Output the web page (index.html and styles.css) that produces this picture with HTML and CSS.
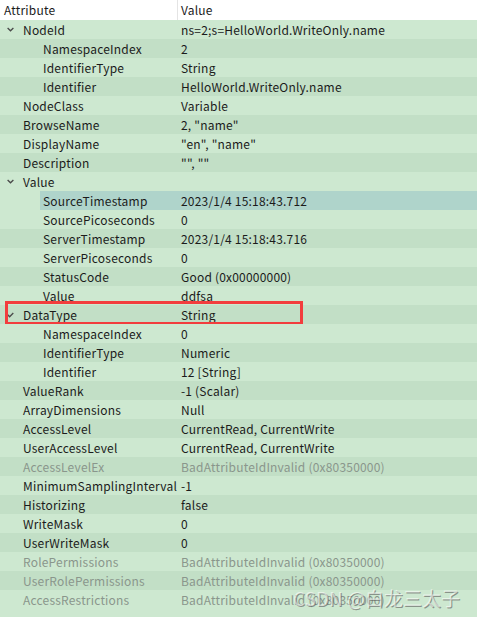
FILE: index.html
```html
<!DOCTYPE html>
<html>
<head>
<meta charset="utf-8">
<link rel="stylesheet" href="styles.css">
</head>
<body>
<div class="grid">
  <div class="header">
    <div class="h-attr">Attribute</div>
    <div class="h-val">Value</div>
  </div>
  <div class="row l0 odd"><div class="indent"><svg class="chev" viewBox="0 0 8 5"><path d="M0.7 0.7 L4 4 L7.3 0.7" /></svg></div><div class="name">NodeId</div><div class="val">ns=2;s=HelloWorld.WriteOnly.name</div></div>
  <div class="row l1 even"><div class="indent"></div><div class="name">NamespaceIndex</div><div class="val">2</div></div>
  <div class="row l1 odd"><div class="indent"></div><div class="name">IdentifierType</div><div class="val">String</div></div>
  <div class="row l1 even"><div class="indent"></div><div class="name">Identifier</div><div class="val">HelloWorld.WriteOnly.name</div></div>
  <div class="row l0 odd"><div class="indent"></div><div class="name">NodeClass</div><div class="val">Variable</div></div>
  <div class="row l0 even"><div class="indent"></div><div class="name">BrowseName</div><div class="val">2, "name"</div></div>
  <div class="row l0 odd"><div class="indent"></div><div class="name">DisplayName</div><div class="val">"en", "name"</div></div>
  <div class="row l0 even"><div class="indent"></div><div class="name">Description</div><div class="val">"", ""</div></div>
  <div class="row l0 odd"><div class="indent"><svg class="chev" viewBox="0 0 8 5"><path d="M0.7 0.7 L4 4 L7.3 0.7" /></svg></div><div class="name">Value</div><div class="val"></div></div>
  <div class="row l1 sel"><div class="indent"></div><div class="name">SourceTimestamp</div><div class="val">2023/1/4 15:18:43.712</div></div>
  <div class="row l1 odd"><div class="indent"></div><div class="name">SourcePicoseconds</div><div class="val">0</div></div>
  <div class="row l1 even"><div class="indent"></div><div class="name">ServerTimestamp</div><div class="val">2023/1/4 15:18:43.716</div></div>
  <div class="row l1 odd"><div class="indent"></div><div class="name">ServerPicoseconds</div><div class="val">0</div></div>
  <div class="row l1 even"><div class="indent"></div><div class="name">StatusCode</div><div class="val">Good (0x00000000)</div></div>
  <div class="row l1 odd"><div class="indent"></div><div class="name">Value</div><div class="val">ddfsa</div></div>
  <div class="row l0 even marked"><div class="indent"><svg class="chev tick" viewBox="0 0 8 6"><path d="M0.8 2.8 L3 5 L7.2 0.8" /></svg></div><div class="name">DataType</div><div class="val">String</div><div class="redbox"></div></div>
  <div class="row l1 odd"><div class="indent"></div><div class="name">NamespaceIndex</div><div class="val">0</div></div>
  <div class="row l1 even"><div class="indent"></div><div class="name">IdentifierType</div><div class="val">Numeric</div></div>
  <div class="row l1 odd"><div class="indent"></div><div class="name">Identifier</div><div class="val">12 [String]</div></div>
  <div class="row l0 even"><div class="indent"></div><div class="name">ValueRank</div><div class="val">-1 (Scalar)</div></div>
  <div class="row l0 odd"><div class="indent"></div><div class="name">ArrayDimensions</div><div class="val">Null</div></div>
  <div class="row l0 even"><div class="indent"></div><div class="name">AccessLevel</div><div class="val">CurrentRead, CurrentWrite</div></div>
  <div class="row l0 odd"><div class="indent"></div><div class="name">UserAccessLevel</div><div class="val">CurrentRead, CurrentWrite</div></div>
  <div class="row l0 even dim"><div class="indent"></div><div class="name">AccessLevelEx</div><div class="val">BadAttributeIdInvalid (0x80350000)</div></div>
  <div class="row l0 odd"><div class="indent"></div><div class="name">MinimumSamplingInterval</div><div class="val">-1</div></div>
  <div class="row l0 even"><div class="indent"></div><div class="name">Historizing</div><div class="val">false</div></div>
  <div class="row l0 odd"><div class="indent"></div><div class="name">WriteMask</div><div class="val">0</div></div>
  <div class="row l0 even"><div class="indent"></div><div class="name">UserWriteMask</div><div class="val">0</div></div>
  <div class="row l0 odd dim"><div class="indent"></div><div class="name">RolePermissions</div><div class="val">BadAttributeIdInvalid (0x80350000)</div></div>
  <div class="row l0 even dim"><div class="indent"></div><div class="name">UserRolePermissions</div><div class="val">BadAttributeIdInvalid (0x80350000)</div></div>
  <div class="row l0 odd dim"><div class="indent"></div><div class="name">AccessRestrictions</div><div class="val">BadAttributeIdInvalid (0x80350000)</div></div>
  <div class="filler"></div>
  <div class="watermark">CSDN @白龙三太子</div>
</div>
</body>
</html>
```

FILE: styles.css
```css
html, body {
  margin: 0;
  padding: 0;
  background: #cde8d0;
}
.grid {
  position: relative;
  width: 477px;
  height: 617px;
  display: flex;
  flex-direction: column;
  font-family: "Noto Sans CJK SC", "Noto Sans", sans-serif;
  font-size: 12px;
  letter-spacing: 0.2px;
  color: #1b1b1b;
  overflow: hidden;
}
.header {
  display: flex;
  height: 20px;
  background: #ffffff;
  flex: none;
}
.h-attr {
  width: 173px;
  padding-left: 4px;
  line-height: 19px;
  border-right: 1px solid #e4e4e4;
}
.h-val {
  padding-left: 3px;
  line-height: 19px;
}
.row {
  position: relative;
  display: flex;
  height: 19px;
  line-height: 19px;
  flex: none;
  white-space: nowrap;
}
.odd { background: #cde8d0; }
.even { background: #c2dfc6; }
.sel { background: #cde8d0; }
.indent {
  flex: none;
  display: flex;
  align-items: center;
  padding-left: 7px;
  box-sizing: border-box;
}
.l0 .indent { width: 20px; }
.l1 .indent { width: 40px; }
.name {
  flex: none;
  padding-left: 3px;
  box-sizing: border-box;
  overflow: visible;
}
.l0 .name { width: 158px; }
.l1 .name { width: 138px; }
.val {
  flex: 1;
  padding-left: 3px;
}
.sel .name, .sel .val { background: #afd4cb; }
.dim .name, .dim .val { color: #8a968c; }
.chev {
  width: 7px;
  height: 5px;
  fill: none;
  stroke: #4a4a4a;
  stroke-width: 1.5;
}
.tick { height: 6px; }
.redbox {
  position: absolute;
  left: 5px;
  top: -4px;
  width: 292px;
  height: 18px;
  border: 3px solid #f23d3d;
}
.filler { flex: 1; background: #cde8d0; }
.watermark {
  position: absolute;
  left: 293px;
  top: 586px;
  font-size: 19px;
  line-height: 24px;
  letter-spacing: 0;
  color: rgba(255, 255, 255, 0.55);
  text-shadow: 1px 1px 0 rgba(90, 90, 90, 0.6);
  white-space: nowrap;
}
```
